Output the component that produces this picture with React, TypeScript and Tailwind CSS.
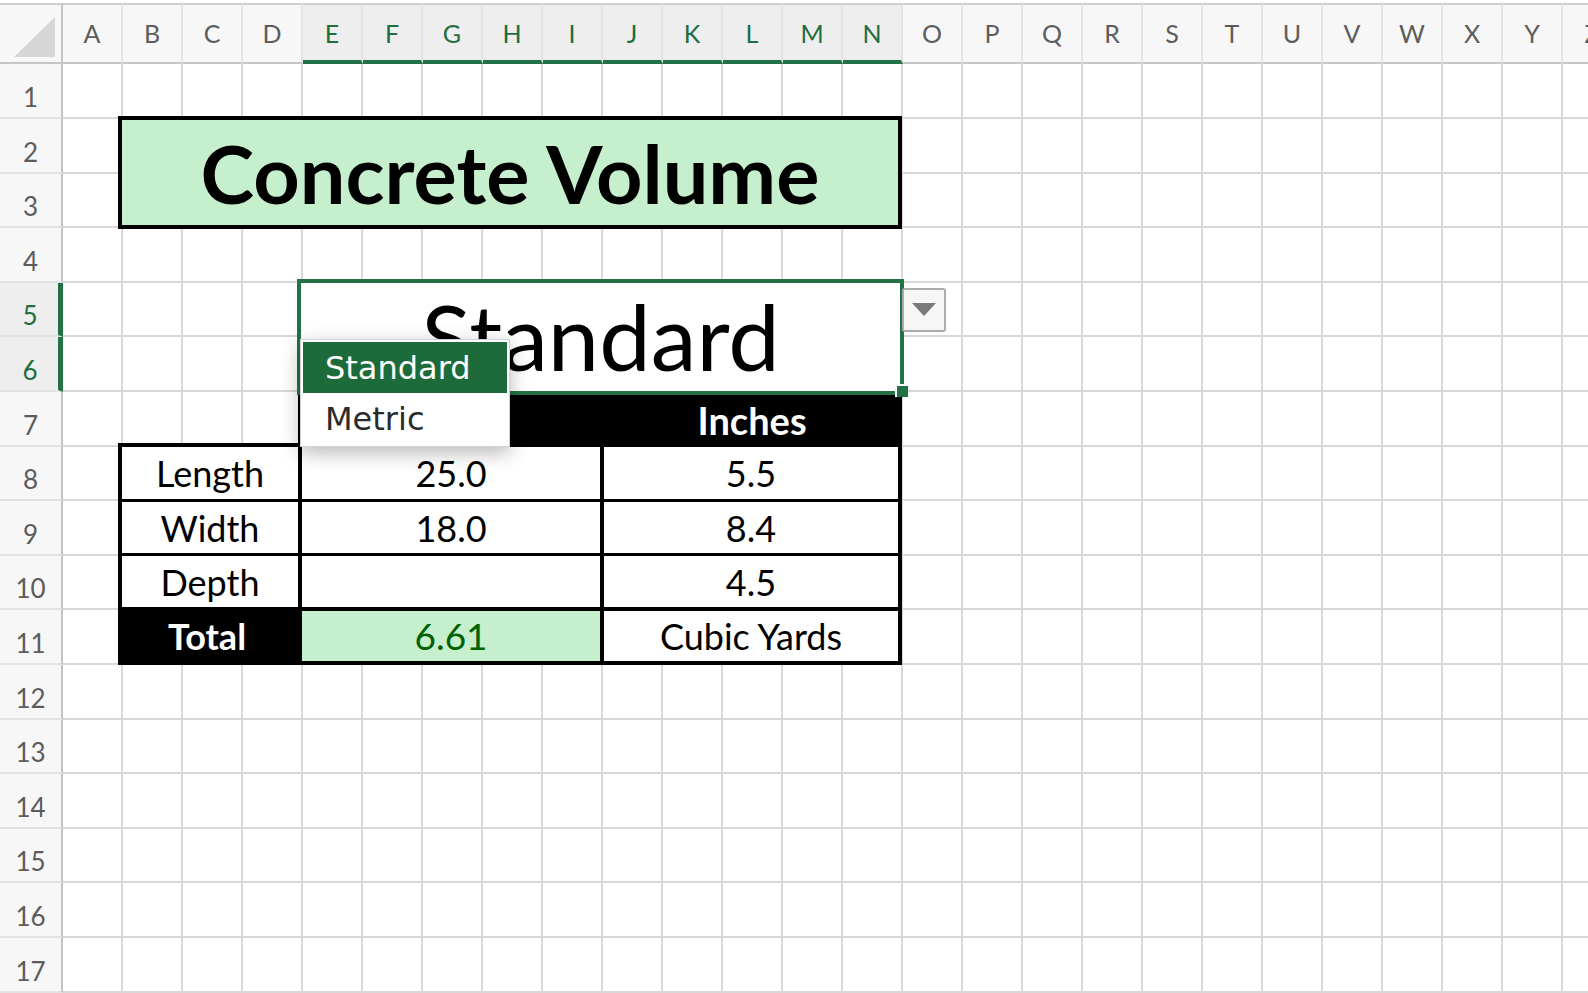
import React from "react"

const COLS = "ABCDEFGHIJKLMNOPQRSTUVWXYZ".split("")
const ROWS = Array.from({ length: 17 }, (_, i) => i + 1)
const SELECTED_COLS = "EFGHIJKLMN"
const SELECTED_ROWS = [5, 6]

// same track sizes for the cell layer and the content layer
const sheetGrid =
  "grid grid-cols-[63px_repeat(26,60px)] grid-rows-[64px_55px_55px_54px_55px_54px_55px_55px_54px_55px_54px_55px_55px_54px_55px_54px_55px_55px]"

function ColHeader({ c }: { c: string }) {
  const sel = SELECTED_COLS.includes(c)
  return (
    <div
      className={
        sel
          ? "mt-[3px] border-t-2 border-t-[#cfcfcf] border-r-2 border-r-[#e2e2e2] border-b-4 border-b-[#217346] bg-[#eeeeee] text-[#1e6e3f] flex items-center justify-center pt-[2px] text-[25px]"
          : "mt-[3px] border-t-2 border-t-[#cfcfcf] border-r-2 border-r-[#e4e4e4] border-b-2 border-b-[#c6c6c6] bg-[#f7f7f7] text-[#5c5c5c] flex items-center justify-center text-[25px]"
      }
    >
      {c}
    </div>
  )
}

function RowHeader({ r }: { r: number }) {
  const sel = SELECTED_ROWS.includes(r)
  return (
    <div
      className={
        sel
          ? "border-b-2 border-b-[#e2e2e2] border-r-[5px] border-r-[#217346] bg-[#eeeeee] text-[#1e6e3f] flex items-center justify-center pt-[13px] pl-[2px] text-[26px]"
          : "border-b-2 border-b-[#e2e2e2] border-r-2 border-r-[#c4c4c4] bg-[#f7f7f7] text-[#5c5c5c] flex items-center justify-center pt-[13px] text-[26px]"
      }
    >
      {r}
    </div>
  )
}

const tableRows = [
  { label: "Length", feet: "25.0", inches: "5.5" },
  { label: "Width", feet: "18.0", inches: "8.4" },
  { label: "Depth", feet: "", inches: "4.5" },
]

export default function App() {
  return (
    <div className="w-full h-[993px] overflow-hidden bg-[#f6f6f6] font-[family-name:Lato,sans-serif] text-black">
      <div className="grid">
        {/* cell layer */}
        <div className={`${sheetGrid} col-start-1 row-start-1 bg-white`}>
          <div className="mt-[3px] border-t-2 border-t-[#cfcfcf] border-b-2 border-b-[#c6c6c6] border-r-2 border-r-[#c4c4c4] bg-[#f7f7f7] flex items-end justify-end pr-[6px] pb-[5px]">
            <svg width="41" height="40" viewBox="0 0 41 40">
              <polygon points="0,40 41,40 41,0" fill="#d6d6d6" />
            </svg>
          </div>
          {COLS.map((c) => (
            <ColHeader key={c} c={c} />
          ))}
          {ROWS.map((r) => (
            <React.Fragment key={r}>
              <RowHeader r={r} />
              {COLS.map((c) => (
                <div key={c} className="border-r-2 border-b-2 border-[#d8d8d8]" />
              ))}
            </React.Fragment>
          ))}
        </div>

        {/* content layer */}
        <div className={`${sheetGrid} col-start-1 row-start-1`}>
          <div className="col-start-3 col-end-16 row-start-3 row-end-5 ml-[-5px] mr-[1px] mt-[-3px] mb-[-1px] border-4 border-black bg-[#c6efce] flex items-center justify-center">
            <span className="text-[81px] font-bold leading-none">Concrete Volume</span>
          </div>

          <div className="col-start-6 col-end-16 row-start-8 row-end-9 ml-[-5px] mr-[1px] bg-black grid grid-cols-[304px_1fr] items-center text-white font-bold text-[38px] leading-none">
            <div className="text-center">Feet</div>
            <div className="text-center">Inches</div>
          </div>

          <div className="relative z-10 col-start-6 col-end-16 row-start-6 row-end-8 ml-[-6px] mr-[-1px] mt-[-4px] mb-[-3px] border-4 border-[#217346] bg-white flex items-end justify-center">
            <span className="text-[92px] leading-none pb-[9px]">Standard</span>

            <div className="absolute right-[-46px] top-[5px] w-[44px] h-[44px] bg-[#f6f6f6] border-2 border-[#ababab] rounded-[3px] flex items-center justify-center">
              <svg width="24" height="14" viewBox="0 0 24 14">
                <path d="M0 0 H24 L12 13 Z" fill="#7a7a7a" />
              </svg>
            </div>

            <div className="absolute right-[-8px] bottom-[-6px] w-[13px] h-[13px] bg-[#217346] border-l-2 border-t-2 border-white" />

            <div className="absolute left-[-1px] top-[56px] w-[210px] h-[108px] bg-white border border-[#d2d2d2] p-[2px] shadow-[0_6px_18px_rgba(0,0,0,0.28)] font-[family-name:'DejaVu_Sans',sans-serif] text-[32px]">
              <div className="h-[51px] bg-[#1d6b3a] text-white flex items-center pl-[22px]">Standard</div>
              <div className="h-[52px] text-[#2b2b2b] flex items-center pl-[22px]">Metric</div>
            </div>
          </div>

          <div className="col-start-3 col-end-16 row-start-9 row-end-13 ml-[-5px] mr-[1px] mt-[-4px] border-4 border-black bg-black grid grid-cols-[176px_298px_1fr] grid-rows-[52px_51px_51px_51px] gap-x-[4px] gap-y-[3px] text-[36px]">
            {tableRows.map((row) => (
              <React.Fragment key={row.label}>
                <div className="bg-white flex items-center justify-center">{row.label}</div>
                <div className="bg-white flex items-center justify-center">{row.feet}</div>
                <div className="bg-white flex items-center justify-center">{row.inches}</div>
              </React.Fragment>
            ))}
            <div className="mt-[1px] bg-black text-white font-bold flex items-center justify-center pr-[6px]">Total</div>
            <div className="mt-[1px] bg-[#c6efce] text-[#006100] text-[37px] flex items-center justify-center">6.61</div>
            <div className="mt-[1px] bg-white flex items-center justify-center">Cubic Yards</div>
          </div>
        </div>
      </div>
    </div>
  )
}
